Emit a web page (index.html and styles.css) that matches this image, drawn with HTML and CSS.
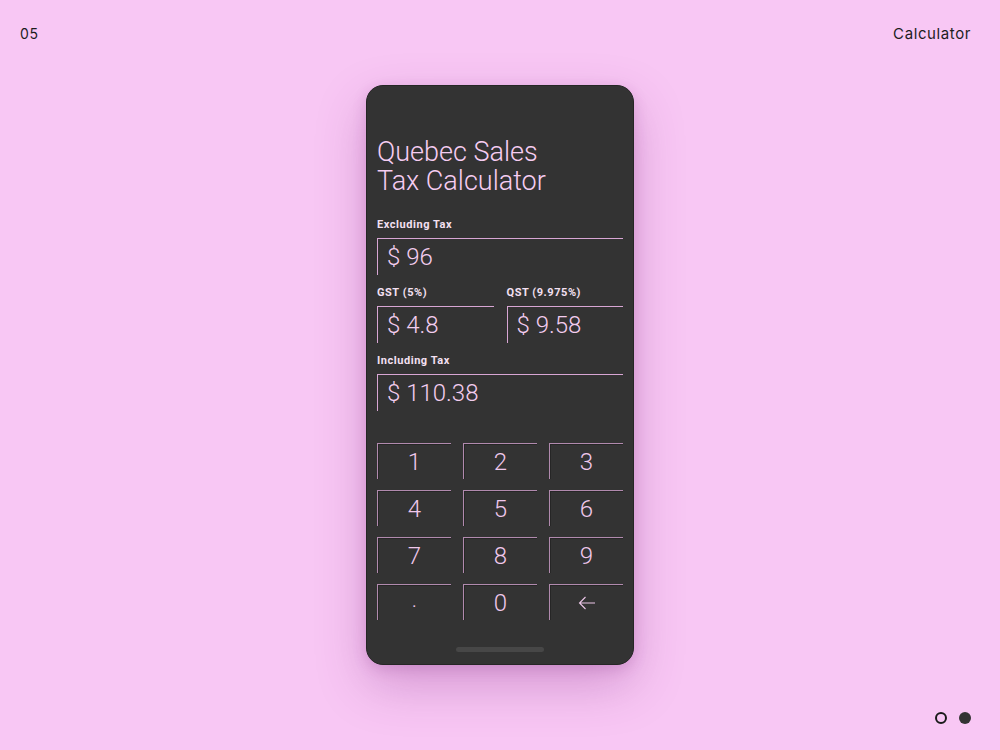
FILE: index.html
```html
<!DOCTYPE html>
<html>
<head>
<meta charset="utf-8">
<link rel="stylesheet" href="styles.css">
</head>
<body>
<header class="top">
  <span class="num">05</span>
  <span class="name">Calculator</span>
</header>
<main class="stage">
  <div class="phone">
    <h1 class="title">Quebec Sales<br>Tax Calculator</h1>
    <div class="field">
      <div class="label">Excluding Tax</div>
      <div class="box">$ 96</div>
    </div>
    <div class="split">
      <div class="field">
        <div class="label">GST (5%)</div>
        <div class="box">$ 4.8</div>
      </div>
      <div class="field">
        <div class="label">QST (9.975%)</div>
        <div class="box">$ 9.58</div>
      </div>
    </div>
    <div class="field">
      <div class="label">Including Tax</div>
      <div class="box">$ 110.38</div>
    </div>
    <div class="keys">
      <div class="key">1</div><div class="key">2</div><div class="key">3</div>
      <div class="key">4</div><div class="key">5</div><div class="key">6</div>
      <div class="key">7</div><div class="key">8</div><div class="key">9</div>
      <div class="key dot">.</div><div class="key">0</div>
      <div class="key"><svg width="18" height="14" viewBox="0 0 18 14"><path d="M17 7H1.5M7.5 1L1.5 7l6 6" fill="none" stroke="#ecc6e8" stroke-width="1.1"/></svg></div>
    </div>
    <div class="home"></div>
  </div>
</main>
<footer class="dots"><span class="ring"></span><span class="fill"></span></footer>
</body>
</html>
```
FILE: styles.css
```css
html, body { margin: 0; padding: 0; }
body {
  width: 1000px; height: 750px; overflow: hidden;
  background: #f8c7f4;
  font-family: Inter, "Noto Sans", sans-serif;
  color: #1d1d1d;
  position: relative;
}
.top {
  display: flex; justify-content: space-between; align-items: center;
  padding: 24px 29px 0 20px; height: 18px;
  font-size: 15px; letter-spacing: 0.6px;
}
.num { font-size: 14px; }
.stage { display: flex; justify-content: center; padding-top: 43px; }
.phone {
  width: 268px; height: 580px; box-sizing: border-box;
  background: #333333;
  border: 1px solid #262626;
  border-radius: 17px;
  padding: 52px 10px 0 10px;
  box-shadow: 0 20px 50px rgba(130, 40, 130, 0.30), 0 4px 14px rgba(130, 40, 130, 0.18);
  position: relative;
  display: flex; flex-direction: column;
  font-family: Roboto, "Noto Sans", sans-serif;
}
.title {
  margin: 0 0 21px 0;
  font-weight: 300; font-size: 27px; line-height: 29px;
  color: #f6cdf2; letter-spacing: 0;
}
.field { display: flex; flex-direction: column; }
.label {
  font-size: 11px; font-weight: 700; color: #f4e0f2;
  letter-spacing: 0.55px; height: 15px; line-height: 15px; margin-bottom: 6px;
}
.box {
  height: 37px; box-sizing: border-box;
  border-top: 1px solid #d8a6d4; border-left: 1px solid #d8a6d4;
  padding-left: 9px;
  font-weight: 300; font-size: 24px; line-height: 36px;
  color: #f3cdef; margin-bottom: 10px;
}
.split { display: grid; grid-template-columns: 1fr 1fr; column-gap: 13px; }
.keys {
  margin-top: 22px;
  display: grid; grid-template-columns: repeat(3, 1fr);
  column-gap: 12px; row-gap: 11px;
}
.key {
  height: 36px; box-sizing: border-box;
  border-top: 1px solid #b18aae; border-left: 1px solid #b18aae;
  box-shadow: inset 1px 1px 0 #262626;
  display: flex; align-items: center; justify-content: center;
  font-weight: 300; font-size: 24px; color: #f0c8ec;
}
.key.dot { align-items: flex-end; padding-bottom: 9px; font-size: 22px; line-height: 22px; }
.home {
  position: absolute; left: 89px; bottom: 12px;
  width: 88px; height: 5px; border-radius: 3px; background: #474747;
}
.dots {
  position: absolute; right: 29px; bottom: 26px;
  display: flex; gap: 12px;
}
.dots span { width: 12px; height: 12px; border-radius: 50%; box-sizing: border-box; }
.ring { border: 2px solid #1a1a1a; }
.fill { background: #333; }
```
